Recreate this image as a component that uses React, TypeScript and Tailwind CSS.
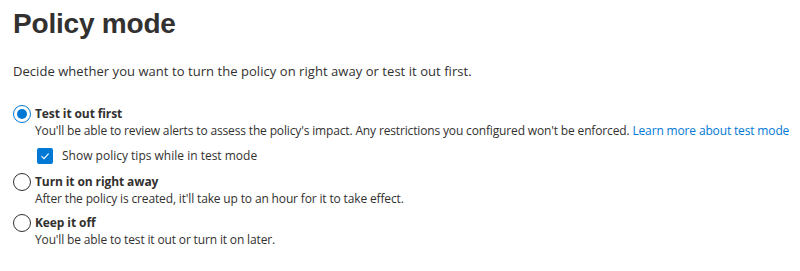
import React, { useState } from 'react';

type Option = {
  id: string;
  label: string;
  description: string;
};

const options: Option[] = [
  {
    id: 'test',
    label: 'Test it out first',
    description:
      "You'll be able to review alerts to assess the policy's impact. Any restrictions you configured won't be enforced.",
  },
  {
    id: 'on',
    label: 'Turn it on right away',
    description: "After the policy is created, it'll take up to an hour for it to take effect.",
  },
  {
    id: 'off',
    label: 'Keep it off',
    description: "You'll be able to test it out or turn it on later.",
  },
];

function Radio({ checked }: { checked: boolean }) {
  return (
    <span
      className={
        checked
          ? 'flex h-[18px] w-[18px] shrink-0 items-center justify-center rounded-full border border-[#0078d4] bg-white'
          : 'flex h-[18px] w-[18px] shrink-0 items-center justify-center rounded-full border border-[#323130] bg-white'
      }
    >
      {checked && <span className="h-[10px] w-[10px] rounded-full bg-[#0078d4]" />}
    </span>
  );
}

export default function App() {
  const [mode, setMode] = useState('test');
  const [tips, setTips] = useState(true);

  return (
    <div
      className="h-[271px] w-[800px] bg-white pl-[13px] pt-[4px] text-[#323130]"
      style={{ fontFamily: '"Open Sans", "Noto Sans", sans-serif' }}
    >
      <h1
        className="text-[28px] font-bold leading-[40px] tracking-[-0.2px]"
        style={{ fontFamily: '"Liberation Sans", Arial, sans-serif' }}
      >
        Policy mode
      </h1>
      <p className="mt-[18px] text-[13px] leading-[18px] tracking-[0.05px]">
        Decide whether you want to turn the policy on right away or test it out first.
      </p>

      <div className="mt-[25px] flex flex-col">
        {options.map((opt) => (
          <div key={opt.id} className="flex flex-col">
            <label className="flex cursor-pointer items-start gap-[4px]" onClick={() => setMode(opt.id)}>
              <span>
                <Radio checked={mode === opt.id} />
              </span>
              <span className="flex flex-col">
                <span className="text-[12px] font-bold leading-[18px] tracking-[-0.1px]">{opt.label}</span>
                <span className="text-[12px] leading-[16px] tracking-[-0.15px]">
                  {opt.description}
                  {opt.id === 'test' && (
                    <>
                      {' '}
                      <a className="text-[#0078d4]" href="#">
                        Learn more about test mode
                      </a>
                    </>
                  )}
                </span>
              </span>
            </label>
            {opt.id === 'test' && (
              <label
                className="ml-[24px] mt-[9px] mb-[9px] flex cursor-pointer items-center gap-[9px]"
                onClick={() => setTips(!tips)}
              >
                <span
                  className={
                    tips
                      ? 'flex h-[16px] w-[16px] items-center justify-center rounded-[2px] bg-[#0078d4]'
                      : 'flex h-[16px] w-[16px] items-center justify-center rounded-[2px] border border-[#323130]'
                  }
                >
                  {tips && (
                    <svg width="10" height="10" viewBox="0 0 10 10" fill="none">
                      <path d="M1.5 5.2 L4 7.6 L8.6 2.6" stroke="white" strokeWidth="1.1" />
                    </svg>
                  )}
                </span>
                <span className="text-[12px] leading-[16px] tracking-[0px]">Show policy tips while in test mode</span>
              </label>
            )}
            {opt.id === 'on' && <div className="h-[7px]" />}
          </div>
        ))}
      </div>
    </div>
  );
}
